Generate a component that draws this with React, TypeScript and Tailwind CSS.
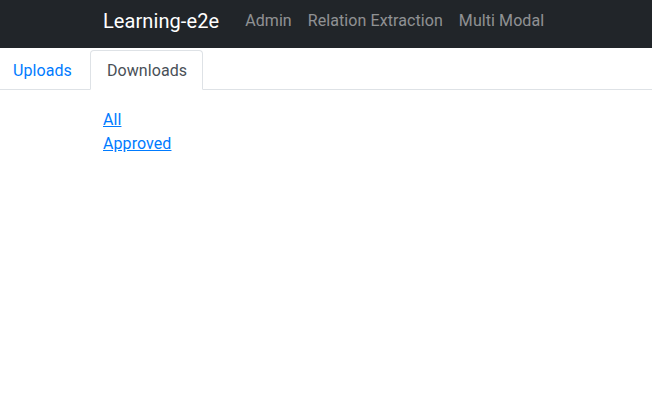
export default function App() {
  return (
    <div className="min-h-[400px] bg-white text-[#212529] font-['Roboto','Liberation_Sans',sans-serif] text-base leading-6 tracking-[0.08px]">
      <nav className="h-[48px] bg-[#212529] flex items-center pl-[103px] pb-[6px]">
        <span className="text-white text-[20px] leading-[30px] mr-[18px]">Learning-e2e</span>
        <a className="px-2 text-white/50">Admin</a>
        <a className="px-2 text-white/50">Relation Extraction</a>
        <a className="px-2 text-white/50">Multi Modal</a>
      </nav>
      <div className="mt-[2px] flex border-b border-[#dee2e6]">
        <a className="pl-[12px] pr-[17px] pt-[8px] pb-[6px] border border-transparent -mb-px text-[#007bff]">Uploads</a>
        <a className="pl-4 pr-[15px] pt-[8px] pb-[6px] border border-[#dee2e6] border-b-white rounded-t -mb-px text-[#495057] bg-white">Downloads</a>
      </div>
      <div className="pl-[103px] pt-[18px] flex flex-col items-start">
        <a className="text-[#007bff] underline">All</a>
        <a className="text-[#007bff] underline">Approved</a>
      </div>
    </div>
  );
}
